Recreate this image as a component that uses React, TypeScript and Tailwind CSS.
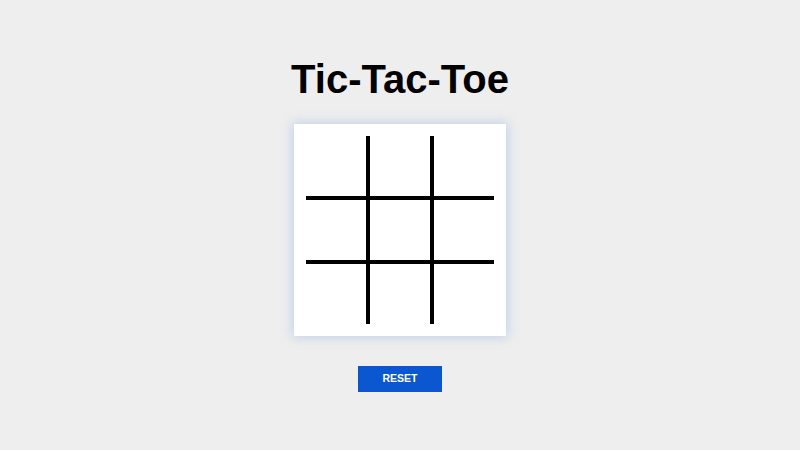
export default function App() {
  const cells = Array.from({ length: 9 });
  return (
    <div
      className="min-h-[450px] w-full bg-[#eeeeee] flex flex-col items-center pt-[57px]"
      style={{ fontFamily: '"Liberation Sans", Arial, sans-serif' }}
    >
      <h1 className="text-[40px] leading-[44px] font-bold text-black">Tic-Tac-Toe</h1>

      <div className="mt-[23px] w-[212px] h-[212px] bg-white p-3 shadow-[0_0_10px_2px_rgba(150,180,225,0.45)]">
        <div className="grid grid-cols-[60px_60px_60px] grid-rows-[60px_60px_60px] gap-1 bg-black">
          {cells.map((_, i) => (
            <div key={i} className="bg-white" />
          ))}
        </div>
      </div>

      <button className="mt-[30px] w-[84px] h-[26px] bg-[#0b57d0] text-white text-[10.5px] font-bold">
        RESET
      </button>
    </div>
  );
}
